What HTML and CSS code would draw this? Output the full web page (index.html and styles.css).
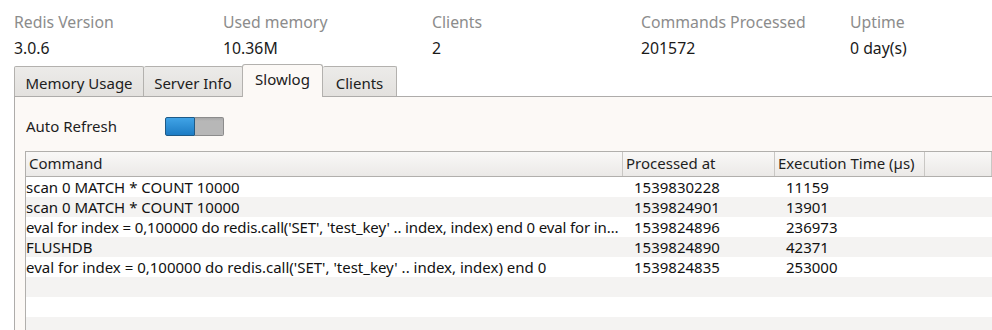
FILE: index.html
```html
<!DOCTYPE html>
<html>
<head>
<meta charset="utf-8">
<link rel="stylesheet" href="styles.css">
</head>
<body>
<div class="stats">
  <div class="stat"><div class="stat-label">Redis Version</div><div class="stat-value">3.0.6</div></div>
  <div class="stat"><div class="stat-label">Used memory</div><div class="stat-value">10.36M</div></div>
  <div class="stat"><div class="stat-label">Clients</div><div class="stat-value">2</div></div>
  <div class="stat"><div class="stat-label">Commands Processed</div><div class="stat-value">201572</div></div>
  <div class="stat"><div class="stat-label">Uptime</div><div class="stat-value">0 day(s)</div></div>
</div>
<div class="tabs">
  <div class="tab tab-first tab-memory">Memory Usage</div>
  <div class="tab tab-server">Server Info</div>
  <div class="tab tab-active tab-slowlog">Slowlog</div>
  <div class="tab tab-clients">Clients</div>
</div>
<div class="pane">
  <div class="refresh-row">
    <span class="refresh-label">Auto Refresh</span>
    <span class="toggle"><span class="toggle-on"></span><span class="toggle-off"></span></span>
  </div>
  <div class="table">
    <div class="row head">
      <div class="hcell">Command</div>
      <div class="hcell">Processed at</div>
      <div class="hcell">Execution Time (µs)</div>
      <div class="hcell hcell-last"></div>
    </div>
    <div class="row">
      <div class="cell cmd">scan 0 MATCH * COUNT 10000</div>
      <div class="cell num">1539830228</div>
      <div class="cell num">11159</div>
      <div class="cell"></div>
    </div>
    <div class="row alt">
      <div class="cell cmd">scan 0 MATCH * COUNT 10000</div>
      <div class="cell num">1539824901</div>
      <div class="cell num">13901</div>
      <div class="cell"></div>
    </div>
    <div class="row">
      <div class="cell cmd cmd-long">eval for index = 0,100000 do redis.call('SET', 'test_key' .. index, index) end 0 eval for in…</div>
      <div class="cell num">1539824896</div>
      <div class="cell num">236973</div>
      <div class="cell"></div>
    </div>
    <div class="row alt">
      <div class="cell cmd">FLUSHDB</div>
      <div class="cell num">1539824890</div>
      <div class="cell num">42371</div>
      <div class="cell"></div>
    </div>
    <div class="row">
      <div class="cell cmd">eval for index = 0,100000 do redis.call('SET', 'test_key' .. index, index) end 0</div>
      <div class="cell num">1539824835</div>
      <div class="cell num">253000</div>
      <div class="cell"></div>
    </div>
    <div class="row alt empty"></div>
    <div class="row empty"></div>
    <div class="row alt empty"></div>
  </div>
</div>
</body>
</html>
```

FILE: styles.css
```css
html, body {
  margin: 0;
  padding: 0;
  background: #ffffff;
  overflow: hidden;
  height: 330px;
}
body {
  font-family: "Noto Sans", "Open Sans", sans-serif;
  font-size: 15px;
  color: #1e1e1e;
  width: 992px;
}
.stats {
  display: grid;
  grid-template-columns: repeat(5, 209px);
  padding: 12px 0 0 14px;
  height: 52px;
  font-size: 15.8px;
}
.stat-label {
  color: #8c8c8c;
  line-height: 20px;
  height: 20px;
}
.stat-value {
  margin-top: 6px;
  line-height: 20px;
  height: 20px;
  color: #1a1a1a;
}
.tabs {
  display: flex;
  align-items: flex-end;
  height: 32px;
  margin-left: 14px;
  position: relative;
  z-index: 2;
}
.tab {
  box-sizing: border-box;
  height: 30px;
  line-height: 30px;
  padding-top: 1px;
  text-align: center;
  background: linear-gradient(#ecebe9, #e3e1de);
  border: 1px solid #b3b1ae;
  border-left: none;
  border-bottom: none;
  border-radius: 2px 2px 0 0;
  color: #202020;
  white-space: nowrap;
}
.tab-first {
  border-left: 1px solid #b3b1ae;
}
.tab-memory { width: 130px; }
.tab-server { width: 99px; }
.tab-slowlog { width: 81px; }
.tab-clients { width: 74px; }
.tab-active {
  height: 33px;
  margin-bottom: -1px;
  background: #fcf9f6;
  border-left: 1px solid #b3b1ae;
  margin-left: -1px;
  line-height: 28px;
  padding-top: 0;
  border-radius: 3px 3px 0 0;
}
.pane {
  margin-left: 14px;
  border-top: 1px solid #aeacaa;
  border-left: 1px solid #aeacaa;
  background: #fcf9f6;
  height: 240px;
  padding: 19px 0 0 11px;
}
.refresh-row {
  display: flex;
  align-items: center;
  height: 20px;
}
.refresh-label {
  width: 139px;
  line-height: 20px;
  color: #1e1e1e;
}
.toggle {
  display: flex;
  width: 59px;
  height: 19px;
}
.toggle-on {
  box-sizing: border-box;
  width: 30px;
  height: 19px;
  background: linear-gradient(#40a3e6, #1d7cc4);
  border: 1px solid #1f5a86;
  border-radius: 2px 0 0 2px;
}
.toggle-off {
  box-sizing: border-box;
  width: 29px;
  height: 19px;
  background: linear-gradient(#a8a8a8 0, #b7b7b7 3px, #b7b7b7);
  border: 1px solid #8c8c8c;
  border-left: none;
  border-radius: 0 2px 2px 0;
}
.table {
  margin: 15px 0 0 -1px;
  border-top: 1px solid #b1afac;
  border-left: 1px solid #b1afac;
  background: #ffffff;
}
.row {
  display: grid;
  grid-template-columns: 597px 152px 150px 1fr;
  height: 20px;
  line-height: 20px;
  background: #ffffff;
}
.row.alt {
  background: #f4f3f2;
}
.row.head {
  height: 24px;
  line-height: 23px;
  background: linear-gradient(#f9f8f7, #ebe9e7);
  border-bottom: 1px solid #b1afac;
}
.hcell {
  padding-left: 3px;
  border-right: 1px solid #c9c7c4;
  white-space: nowrap;
  overflow: hidden;
  color: #1e1e1e;
}
.hcell-last {
  box-sizing: border-box;
  width: 67px;
}
.cell {
  white-space: nowrap;
  overflow: hidden;
  color: #111111;
}
.cell.cmd {
  padding-left: 0;
  padding-right: 2px;
}
.cell.cmd-long {
  letter-spacing: -0.14px;
}
.cell.num {
  padding-left: 11px;
}
```
